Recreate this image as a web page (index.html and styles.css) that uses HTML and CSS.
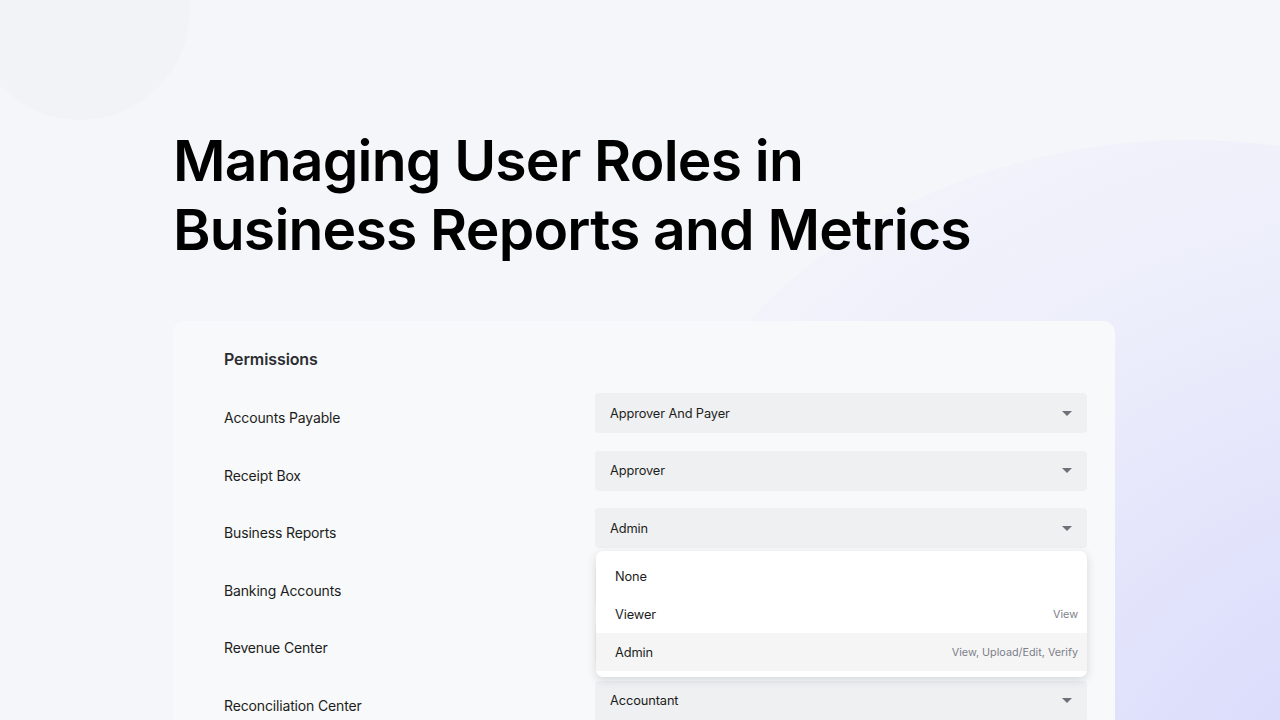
FILE: index.html
```html
<!DOCTYPE html>
<html>
<head>
<meta charset="utf-8">
<link rel="stylesheet" href="styles.css">
</head>
<body>
<div class="page">
  <div class="blob-tl"></div>
  <div class="blob-br"></div>
  <main class="content">
    <h1 class="title">Managing User Roles in<br>Business Reports and Metrics</h1>
    <section class="card">
      <h2 class="card-title">Permissions</h2>
      <div class="rows">
        <div class="row">
          <div class="label">Accounts Payable</div>
          <div class="select"><span>Approver And Payer</span><span class="caret"></span></div>
        </div>
        <div class="row">
          <div class="label">Receipt Box</div>
          <div class="select"><span>Approver</span><span class="caret"></span></div>
        </div>
        <div class="row">
          <div class="label">Business Reports</div>
          <div class="select-wrap">
            <div class="select"><span>Admin</span><span class="caret"></span></div>
            <div class="menu">
              <div class="opt"><span>None</span></div>
              <div class="opt"><span>Viewer</span><span class="hint">View</span></div>
              <div class="opt active"><span>Admin</span><span class="hint">View, Upload/Edit, Verify</span></div>
            </div>
          </div>
        </div>
        <div class="row">
          <div class="label">Banking Accounts</div>
          <div class="select"><span></span><span class="caret"></span></div>
        </div>
        <div class="row">
          <div class="label">Revenue Center</div>
          <div class="select"><span></span><span class="caret"></span></div>
        </div>
        <div class="row">
          <div class="label">Reconciliation Center</div>
          <div class="select"><span>Accountant</span><span class="caret"></span></div>
        </div>
      </div>
    </section>
  </main>
</div>
</body>
</html>
```
FILE: styles.css
```css
html, body {
  margin: 0;
  padding: 0;
}
body {
  font-family: Inter, "Noto Sans", sans-serif;
  color: #111;
}
.page {
  position: relative;
  width: 1280px;
  height: 720px;
  overflow: hidden;
  background: #f5f6fa;
}
.blob-tl {
  position: absolute;
  left: -30px;
  top: -100px;
  width: 220px;
  height: 220px;
  border-radius: 50%;
  background: #f2f3f6;
}
.blob-br {
  position: absolute;
  left: 640px;
  top: 140px;
  width: 1100px;
  height: 900px;
  border-radius: 50%;
  background: radial-gradient(ellipse at 75% 80%, #d4d5fb 0%, #dfe0fb 30%, #eceefb 60%, #f3f4fa 85%);
}
.content {
  position: relative;
  padding: 126px 0 0 173px;
}
.title {
  margin: 0;
  font-family: Inter, sans-serif;
  font-weight: 600;
  font-size: 57px;
  line-height: 69px;
  letter-spacing: -0.8px;
  color: #000;
}
.card {
  margin-top: 57px;
  width: 942px;
  height: 500px;
  box-sizing: border-box;
  background: #f8f9fa;
  border-radius: 12px;
  padding: 28px 28px 0 51px;
}
.card-title {
  margin: 0;
  font-size: 16px;
  font-weight: 600;
  line-height: 20px;
  color: #2b2d31;
  letter-spacing: -0.1px;
}
.rows {
  margin-top: 24px;
  display: flex;
  flex-direction: column;
  gap: 17.6px;
}
.row {
  display: flex;
  align-items: flex-start;
  height: 40px;
}
.label {
  width: 371px;
  padding-top: 15px;
  font-size: 14px;
  line-height: 20px;
  letter-spacing: -0.15px;
  color: #1c1d20;
}
.select-wrap {
  position: relative;
  width: 492px;
}
.select {
  width: 492px;
  height: 40px;
  box-sizing: border-box;
  background: #eff0f2;
  border-radius: 4px;
  display: flex;
  align-items: center;
  justify-content: space-between;
  padding: 0 15px;
  font-size: 12.8px;
  letter-spacing: -0.1px;
  color: #1c1d20;
}
.caret {
  width: 0;
  height: 0;
  border-left: 5px solid transparent;
  border-right: 5px solid transparent;
  border-top: 5px solid #6c717a;
}
.menu {
  position: absolute;
  left: 1px;
  top: 43px;
  width: 491px;
  box-sizing: border-box;
  padding: 6px 0;
  background: #fff;
  border-radius: 7px;
  box-shadow: 0 3px 10px rgba(30, 35, 50, 0.16);
  z-index: 2;
}
.opt {
  height: 38px;
  display: flex;
  align-items: center;
  justify-content: space-between;
  padding: 0 9px 0 19px;
  font-size: 12.8px;
  letter-spacing: -0.1px;
  color: #1c1d20;
}
.opt.active {
  background: #f5f5f6;
}
.hint {
  font-size: 10.8px;
  letter-spacing: 0;
  color: #7c8089;
}
```
